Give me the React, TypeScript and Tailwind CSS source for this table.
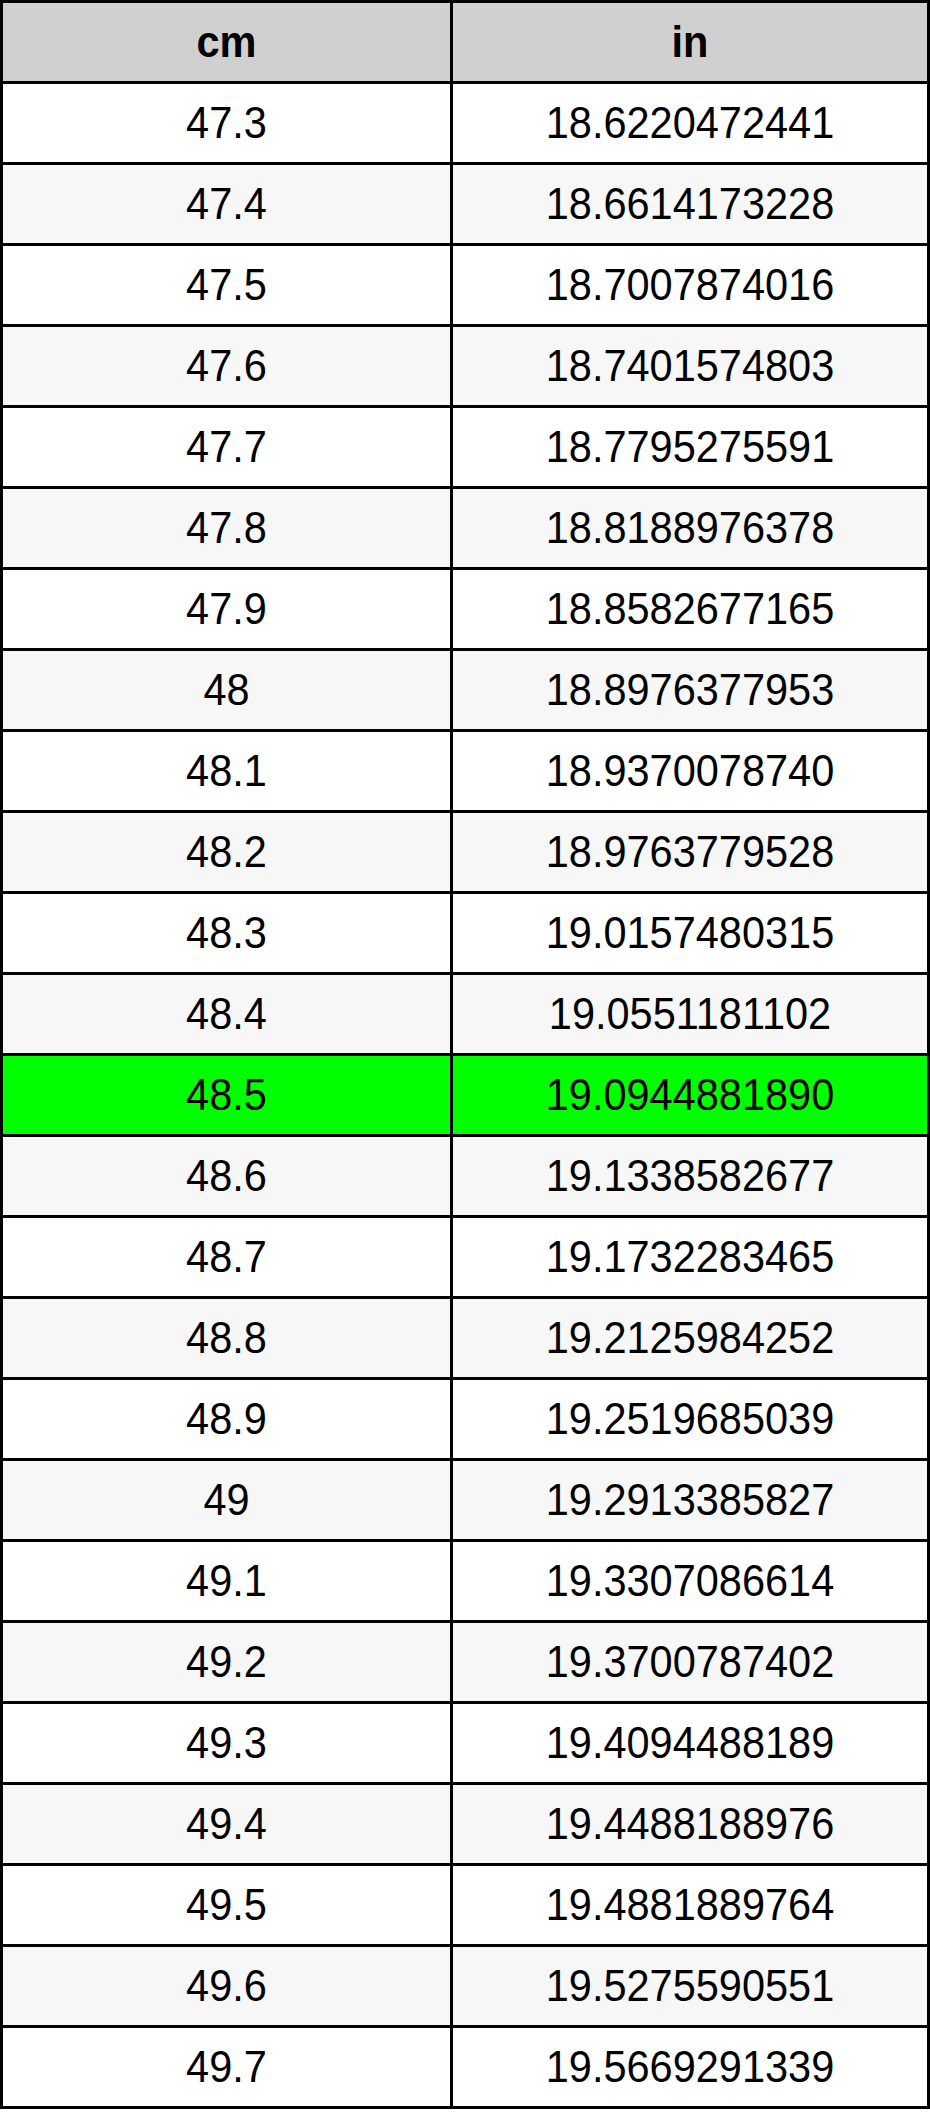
import React from "react";

const rows: [string, string][] = [
  ["47.3", "18.6220472441"],
  ["47.4", "18.6614173228"],
  ["47.5", "18.7007874016"],
  ["47.6", "18.7401574803"],
  ["47.7", "18.7795275591"],
  ["47.8", "18.8188976378"],
  ["47.9", "18.8582677165"],
  ["48", "18.8976377953"],
  ["48.1", "18.9370078740"],
  ["48.2", "18.9763779528"],
  ["48.3", "19.0157480315"],
  ["48.4", "19.0551181102"],
  ["48.5", "19.0944881890"],
  ["48.6", "19.1338582677"],
  ["48.7", "19.1732283465"],
  ["48.8", "19.2125984252"],
  ["48.9", "19.2519685039"],
  ["49", "19.2913385827"],
  ["49.1", "19.3307086614"],
  ["49.2", "19.3700787402"],
  ["49.3", "19.4094488189"],
  ["49.4", "19.4488188976"],
  ["49.5", "19.4881889764"],
  ["49.6", "19.5275590551"],
  ["49.7", "19.5669291339"],
];

export default function App() {
  return (
    <div className="w-[930px] bg-white" style={{ fontFamily: '"Liberation Sans", Arial, sans-serif' }}>
      <div className="grid grid-cols-[447px_474px] auto-rows-[78px] gap-[3px] bg-black p-[3px] text-black text-[41.5px] leading-none">
        <div className="flex items-center justify-center bg-[#d0d0d0] font-bold">
          <span className="inline-block scale-y-[1.08]">cm</span>
        </div>
        <div className="flex items-center justify-center bg-[#d0d0d0] font-bold">
          <span className="inline-block scale-y-[1.08]">in</span>
        </div>
        {rows.map(([cm, inch], i) => {
          const bg = cm === "48.5" ? "bg-[#00ff00]" : i % 2 === 0 ? "bg-white" : "bg-[#f7f7f7]";
          return (
            <React.Fragment key={cm}>
              <div className={`flex items-center justify-center ${bg}`}>
                <span className="inline-block scale-y-[1.08]">{cm}</span>
              </div>
              <div className={`flex items-center justify-center ${bg}`}>
                <span className="inline-block scale-y-[1.08]">{inch}</span>
              </div>
            </React.Fragment>
          );
        })}
      </div>
    </div>
  );
}
